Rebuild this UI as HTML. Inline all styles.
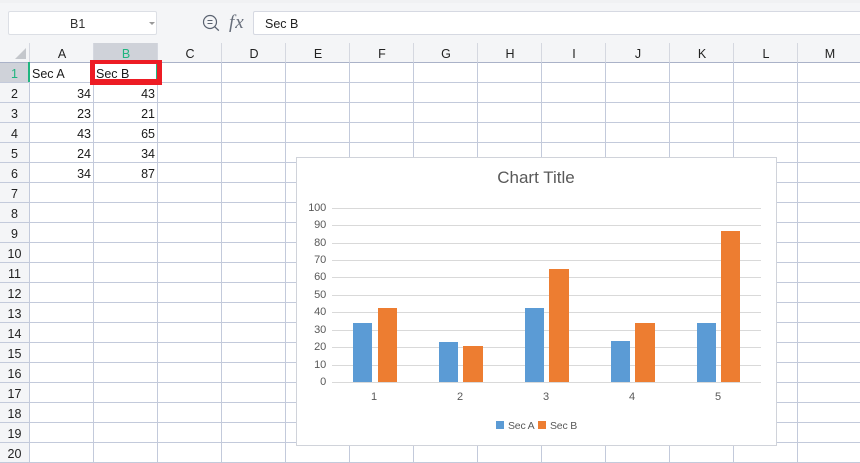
<!DOCTYPE html>
<html><head><meta charset="utf-8">
<style>
html,body{margin:0;padding:0;width:860px;height:463px;overflow:hidden;background:#fff}
body{position:relative;font-family:"Liberation Sans",sans-serif;font-size:12.5px;color:#1a1a1a}
.a{position:absolute}
.v{position:absolute;width:1px;background:#c3cadb;top:62px;height:401px}
.h{position:absolute;height:1px;background:#c3cadb;left:0;width:860px}
.ch{position:absolute;top:43px;height:19px;line-height:22px;text-align:center;width:64px;color:#222}
.hs{position:absolute;top:43px;width:1px;height:19px;background:#d5d8e0}
.rh{position:absolute;left:0;width:29px;height:19px;line-height:22px;text-align:center;background:#f4f5f7;color:#222}
.c{position:absolute;height:19px;line-height:22px;width:60px;text-align:right}
.gl{position:absolute;left:332px;width:429px;height:1px;background:#d9d9d9}
.yl{position:absolute;left:300px;width:26px;text-align:right;font-size:11px;letter-spacing:-.2px;color:#595959;height:12px;line-height:13px}
.xl{position:absolute;top:391px;width:20px;text-align:center;font-size:11px;color:#595959}
.b{position:absolute}
.A{background:#5b9bd5}.B{background:#ed7d31}
</style></head>
<body>
<div class="a" style="left:0;top:0;width:860px;height:43px;background:#f4f5f7"></div>
<div class="a" style="left:0;top:0;width:860px;height:3px;background:#f0f1f3"></div>
<div class="a" style="left:8px;top:11px;width:147px;height:22px;padding-right:0;background:#fff;border:1px solid #dcdfe5;border-radius:2px;line-height:24px;color:#333"><span style="position:absolute;left:61px;top:0">B1</span></div>
<div class="a" style="left:149px;top:22px;width:0;height:0;border-left:3px solid transparent;border-right:3px solid transparent;border-top:3px solid #999"></div>
<svg class="a" style="left:200px;top:13px" width="22" height="20" viewBox="0 0 22 20"><circle cx="10" cy="9" r="6.5" fill="none" stroke="#5a6270" stroke-width="1.2"/><path d="M7.5 7.5h5M7.5 10.5h5" stroke="#5a6270" stroke-width="1.1" fill="none"/><path d="M14.8 13.8l4 3.8" stroke="#5a6270" stroke-width="1.3" fill="none"/></svg>
<div class="a" style="left:229px;top:13px;font-family:'Liberation Serif',serif;font-style:italic;font-size:19px;letter-spacing:1px;line-height:20px;color:#666d7a">fx</div>
<div class="a" style="left:253px;top:11px;width:607px;height:22px;background:#fff;border:1px solid #d6d9e2;border-right:0;border-radius:2px 0 0 2px;line-height:24px;color:#222;text-indent:11px">Sec B</div>

<div class="a" style="left:0;top:43px;width:860px;height:19px;background:#f4f5f7"></div>
<div class="a" style="left:93px;top:43px;width:64px;height:19px;background:#cfd2d9"></div>
<div class="a" style="left:0;top:43px;width:29px;height:420px;background:#f4f5f7"></div>
<div class="a" style="left:0;top:63px;width:29px;height:19px;background:#cfd2d9"></div>
<svg class="a" style="left:14px;top:47px" width="13" height="13"><path d="M12 1V12H1Z" fill="#c4c7cc"/></svg>

<div class="hs" style="left:29px"></div><div class="hs" style="left:93px"></div><div class="hs" style="left:157px"></div><div class="hs" style="left:221px"></div><div class="hs" style="left:285px"></div><div class="hs" style="left:349px"></div><div class="hs" style="left:413px"></div><div class="hs" style="left:477px"></div><div class="hs" style="left:541px"></div><div class="hs" style="left:605px"></div><div class="hs" style="left:669px"></div><div class="hs" style="left:733px"></div><div class="hs" style="left:797px"></div>

<div class="ch" style="left:30px">A</div><div class="ch" style="left:94px;color:#1fb57f">B</div><div class="ch" style="left:158px">C</div><div class="ch" style="left:222px">D</div><div class="ch" style="left:286px">E</div><div class="ch" style="left:350px">F</div><div class="ch" style="left:414px">G</div><div class="ch" style="left:478px">H</div><div class="ch" style="left:542px">I</div><div class="ch" style="left:606px">J</div><div class="ch" style="left:670px">K</div><div class="ch" style="left:734px">L</div><div class="ch" style="left:798px">M</div>

<div class="rh" style="top:63px;color:#1fb57f;background:#cfd2d9">1</div>
<div class="rh" style="top:83px">2</div><div class="rh" style="top:103px">3</div><div class="rh" style="top:123px">4</div><div class="rh" style="top:143px">5</div><div class="rh" style="top:163px">6</div><div class="rh" style="top:183px">7</div><div class="rh" style="top:203px">8</div><div class="rh" style="top:223px">9</div><div class="rh" style="top:243px">10</div><div class="rh" style="top:263px">11</div><div class="rh" style="top:283px">12</div><div class="rh" style="top:303px">13</div><div class="rh" style="top:323px">14</div><div class="rh" style="top:343px">15</div><div class="rh" style="top:363px">16</div><div class="rh" style="top:383px">17</div><div class="rh" style="top:403px">18</div><div class="rh" style="top:423px">19</div><div class="rh" style="top:443px">20</div>

<div class="h" style="top:62px;background:#aab2c8"></div>
<div class="h" style="top:82px"></div><div class="h" style="top:102px"></div><div class="h" style="top:122px"></div><div class="h" style="top:142px"></div><div class="h" style="top:162px"></div><div class="h" style="top:182px"></div><div class="h" style="top:202px"></div><div class="h" style="top:222px"></div><div class="h" style="top:242px"></div><div class="h" style="top:262px"></div><div class="h" style="top:282px"></div><div class="h" style="top:302px"></div><div class="h" style="top:322px"></div><div class="h" style="top:342px"></div><div class="h" style="top:362px"></div><div class="h" style="top:382px"></div><div class="h" style="top:402px"></div><div class="h" style="top:422px"></div><div class="h" style="top:442px"></div><div class="h" style="top:462px"></div>

<div class="v" style="left:29px"></div><div class="v" style="left:93px"></div><div class="v" style="left:157px"></div><div class="v" style="left:221px"></div><div class="v" style="left:285px"></div><div class="v" style="left:349px"></div><div class="v" style="left:413px"></div><div class="v" style="left:477px"></div><div class="v" style="left:541px"></div><div class="v" style="left:605px"></div><div class="v" style="left:669px"></div><div class="v" style="left:733px"></div><div class="v" style="left:797px"></div>

<div class="a" style="left:28px;top:62px;width:2px;height:20px;background:#1fb57f"></div>
<div class="c" style="left:32px;top:63px;text-align:left">Sec A</div>
<div class="c" style="left:31px;top:83px">34</div><div class="c" style="left:31px;top:103px">23</div><div class="c" style="left:31px;top:123px">43</div><div class="c" style="left:31px;top:143px">24</div><div class="c" style="left:31px;top:163px">34</div>
<div class="c" style="left:95px;top:83px">43</div><div class="c" style="left:95px;top:103px">21</div><div class="c" style="left:95px;top:123px">65</div><div class="c" style="left:95px;top:143px">34</div><div class="c" style="left:95px;top:163px">87</div>

<div class="a" style="left:90px;top:60px;width:62px;height:15px;border:solid #ed1c24;border-width:4px 5px 6px 5px;background:#fff"></div>
<div class="a" style="left:156px;top:64px;width:1px;height:15px;background:#1fb57f"></div>
<div class="c" style="left:96px;top:63px;text-align:left">Sec B</div>

<div class="a" style="left:296px;top:157px;width:479px;height:287px;background:#fff;border:1px solid #d0d3da"></div>
<div class="a" style="left:296px;top:168px;width:480px;text-align:center;font-size:17px;line-height:20px;color:#595959">Chart Title</div>

<div class="gl" style="top:208px"></div><div class="gl" style="top:225px"></div><div class="gl" style="top:243px"></div><div class="gl" style="top:260px"></div><div class="gl" style="top:277px"></div><div class="gl" style="top:295px"></div><div class="gl" style="top:312px"></div><div class="gl" style="top:330px"></div><div class="gl" style="top:347px"></div><div class="gl" style="top:365px"></div><div class="gl" style="top:382px"></div>

<div class="yl" style="top:202px">100</div><div class="yl" style="top:219px">90</div><div class="yl" style="top:237px">80</div><div class="yl" style="top:254px">70</div><div class="yl" style="top:271px">60</div><div class="yl" style="top:289px">50</div><div class="yl" style="top:306px">40</div><div class="yl" style="top:324px">30</div><div class="yl" style="top:341px">20</div><div class="yl" style="top:359px">10</div><div class="yl" style="top:376px">0</div>

<div class="b A" style="left:353px;top:323px;width:19px;height:59px"></div><div class="b B" style="left:378px;top:308px;width:19px;height:74px"></div>
<div class="b A" style="left:439px;top:342px;width:19px;height:40px"></div><div class="b B" style="left:463px;top:346px;width:20px;height:36px"></div>
<div class="b A" style="left:525px;top:308px;width:19px;height:74px"></div><div class="b B" style="left:549px;top:269px;width:20px;height:113px"></div>
<div class="b A" style="left:611px;top:341px;width:19px;height:41px"></div><div class="b B" style="left:635px;top:323px;width:20px;height:59px"></div>
<div class="b A" style="left:697px;top:323px;width:19px;height:59px"></div><div class="b B" style="left:721px;top:231px;width:19px;height:151px"></div>

<div class="xl" style="left:364px">1</div><div class="xl" style="left:450px">2</div><div class="xl" style="left:536px">3</div><div class="xl" style="left:622px">4</div><div class="xl" style="left:708px">5</div>

<div class="b A" style="left:496px;top:421px;width:8px;height:8px"></div>
<div class="a" style="left:508px;top:420px;font-size:10.5px;letter-spacing:-.2px;line-height:12px;color:#595959">Sec A</div>
<div class="b B" style="left:538px;top:421px;width:8px;height:8px"></div>
<div class="a" style="left:550px;top:420px;font-size:10.5px;letter-spacing:-.2px;line-height:12px;color:#595959">Sec B</div>
</body></html>
